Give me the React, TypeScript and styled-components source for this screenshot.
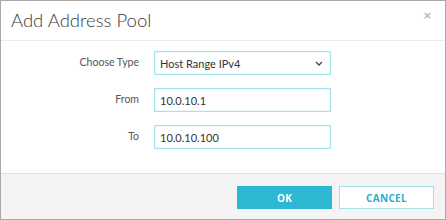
import React from "react";
import styled, { createGlobalStyle } from "styled-components";

const Global = createGlobalStyle`
  html, body { margin: 0; padding: 0; background: #fff; }
  * { box-sizing: border-box; }
`;

const Dialog = styled.div`
  width: 446px;
  height: 220px;
  border: 1px solid #a9a9a9;
  display: flex;
  flex-direction: column;
  background: #fff;
  font-family: Lato, "Open Sans", sans-serif;
`;

const Header = styled.div`
  height: 40px;
  flex: none;
  border-bottom: 1px solid #ececec;
  display: flex;
  align-items: center;
  justify-content: space-between;
  padding: 0 13px 2px 10px;
`;

const Title = styled.h1`
  margin: 0;
  font-family: Lato, sans-serif;
  font-weight: 300;
  font-size: 18.5px;
  color: #3a3a3a;
`;

const Close = styled.span`
  font-family: "DejaVu Sans", sans-serif;
  font-size: 11px;
  font-weight: bold;
  color: #b4b4b4;
  line-height: 1;
  margin-top: -8px;
`;

const Body = styled.div`
  flex: 1;
  display: grid;
  grid-template-columns: 138px 177px;
  column-gap: 15px;
  row-gap: 13px;
  align-content: start;
  padding-top: 10px;
`;

const Label = styled.label`
  font-size: 10.5px;
  color: #555;
  text-align: right;
  align-self: center;
  padding-bottom: 2px;
`;

const Field = styled.div`
  height: 24px;
  border: 1px solid #a5e3ee;
  box-shadow: inset 0 0 0 0.5px #d4f2f7;
  display: flex;
  align-items: center;
  justify-content: space-between;
  padding: 0 7px 0 5px;
  font-size: 11px;
  color: #333;
  background: #fff;
`;

const Footer = styled.div`
  height: 46px;
  flex: none;
  border-top: 1px solid #e2e2e2;
  background: #f4f4f4;
  display: flex;
  justify-content: flex-end;
  align-items: flex-start;
  gap: 7px;
  padding: 12px 11px 0 0;
`;

const Button = styled.button<{ $primary?: boolean }>`
  width: 95px;
  height: 23px;
  border: 1px solid ${(p) => (p.$primary ? "#2bb5d0" : "#a3e1ec")};
  background: ${(p) => (p.$primary ? "#2db9d4" : "#fff")};
  color: ${(p) => (p.$primary ? "#fff" : "#2aaecb")};
  font-family: "Open Sans", Lato, sans-serif;
  font-weight: 700;
  font-size: 10px;
  letter-spacing: 0.3px;
  padding: 0;
`;

const Chevron = () => (
  <svg width="8" height="5" viewBox="0 0 8 5">
    <path d="M1 1 L4 4 L7 1" fill="none" stroke="#444" strokeWidth="1.3" />
  </svg>
);

export default function App() {
  return (
    <>
      <Global />
      <Dialog>
        <Header>
          <Title>Add Address Pool</Title>
          <Close>×</Close>
        </Header>
        <Body>
          <Label>Choose Type</Label>
          <Field>
            <span>Host Range IPv4</span>
            <Chevron />
          </Field>
          <Label>From</Label>
          <Field>10.0.10.1</Field>
          <Label>To</Label>
          <Field>10.0.10.100</Field>
        </Body>
        <Footer>
          <Button $primary>OK</Button>
          <Button>CANCEL</Button>
        </Footer>
      </Dialog>
    </>
  );
}
